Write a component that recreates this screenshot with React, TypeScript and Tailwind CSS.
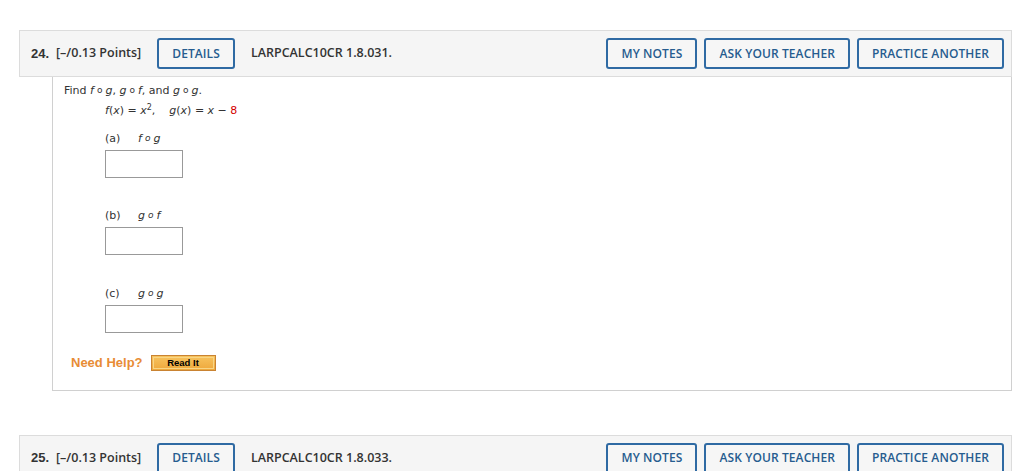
import React from "react";

const sans = { fontFamily: '"Open Sans", "Liberation Sans", sans-serif' };
const verdana = { fontFamily: '"DejaVu Sans", Verdana, sans-serif' };

function HeaderButton({ label }: { label: string }) {
  return (
    <button className="h-[31px] px-[13px] border-2 border-[#2f6aa3] rounded-[3px] bg-[#f6f6f6] text-[12px] font-semibold text-[#265c8f] tracking-[0.1px]">
      {label}
    </button>
  );
}

function QuestionHeader({ num, code }: { num: string; code: string }) {
  return (
    <div
      className="h-[47px] bg-[#f5f5f5] border border-[#dcdcdc] flex items-center pl-[11px] pr-[7px]"
      style={sans}
    >
      <span
        className="text-[13px] font-bold text-[#333] w-[25px]"
        style={{ fontFamily: '"Liberation Sans", Arial, sans-serif' }}
      >
        {num}
      </span>
      <span className="text-[12.5px] font-semibold text-[#333]">[–/0.13 Points]</span>
      <div className="ml-[16px]">
        <HeaderButton label="DETAILS" />
      </div>
      <span className="ml-[16px] text-[12.5px] font-semibold text-[#333]">{code}</span>
      <div className="ml-auto flex gap-[7px]">
        <HeaderButton label="MY NOTES" />
        <HeaderButton label="ASK YOUR TEACHER" />
        <HeaderButton label="PRACTICE ANOTHER" />
      </div>
    </div>
  );
}

const C = () => <span className="text-[9px] mx-[3px] align-[1px]">o</span>;

function Part({ label, children }: { label: string; children: React.ReactNode }) {
  return (
    <div className="flex items-center h-[16px] ml-[41px]">
      <span className="w-[33px]">{label}</span>
      <span className="italic">{children}</span>
    </div>
  );
}

function AnswerBox() {
  return <div className="ml-[41px] mt-[3px] w-[78px] h-[28px] border border-[#999] bg-white" />;
}

export default function App() {
  return (
    <div className="bg-white min-h-screen pt-[30px] pl-[19px] pr-[12px] overflow-hidden">
      <QuestionHeader num="24." code="LARPCALC10CR 1.8.031." />
      <div
        className="ml-[33px] border-l border-r border-b border-[#d0d0d0] pl-[11px] pt-[5px] pb-[17px] text-[11px] text-[#333] bg-white"
        style={verdana}
      >
        <div className="h-[16px] leading-[16px]">
          Find <i>f</i>
          <C />
          <i>g</i>, <i>g</i>
          <C />
          <i>f</i>, and <i>g</i>
          <C />
          <i>g</i>.
        </div>
        <div className="h-[16px] leading-[16px] mt-[5px] ml-[41px] text-[11px]">
          <i>f</i>(<i>x</i>) = <i>x</i>
          <sup className="text-[8px]">2</sup>,&nbsp;&nbsp;&nbsp; <i>g</i>(<i>x</i>) = <i>x</i> − <span className="text-[#d40000]">8</span>
        </div>
        <div className="mt-[12px]">
          <Part label="(a)">
            f<C />g
          </Part>
        </div>
        <AnswerBox />
        <div className="mt-[30px]">
          <Part label="(b)">
            g<C />f
          </Part>
        </div>
        <AnswerBox />
        <div className="mt-[31px]">
          <Part label="(c)">
            g<C />g
          </Part>
        </div>
        <AnswerBox />
        <div className="mt-[20px] ml-[7px] flex items-center gap-[8px]">
          <span
            className="text-[13px] font-bold text-[#e88c35]"
            style={{ fontFamily: '"Liberation Sans", Arial, sans-serif' }}
          >
            Need Help?
          </span>
          <button
            className="w-[65px] h-[16px] border border-[#c98332] bg-gradient-to-b from-[#f7c35d] to-[#eea83c] flex items-center justify-center p-[1px]"
            style={{ fontFamily: '"Liberation Sans", Arial, sans-serif' }}
          >
            <span className="w-full h-full border border-[#f8d585] flex items-center justify-center text-[9.5px] font-bold text-black leading-none">
              Read It
            </span>
          </button>
        </div>
      </div>
      <div className="mt-[44px]">
        <QuestionHeader num="25." code="LARPCALC10CR 1.8.033." />
      </div>
    </div>
  );
}
